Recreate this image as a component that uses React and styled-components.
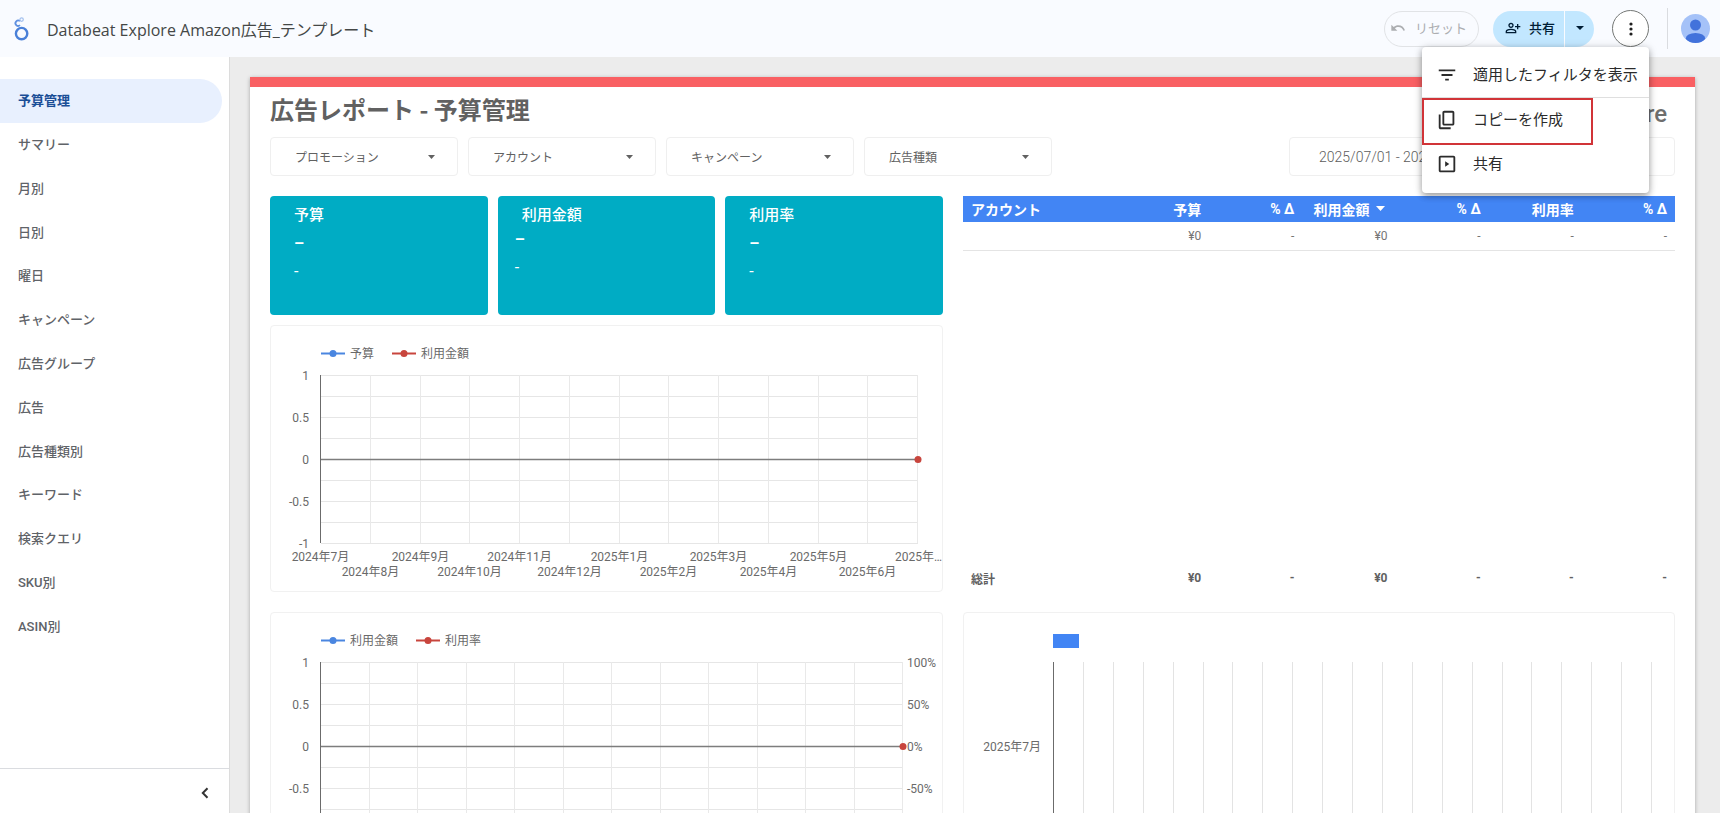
import React, { useLayoutEffect, useRef, useState } from "react";
import styled, { createGlobalStyle } from "styled-components";

const GlobalStyle = createGlobalStyle`
  *, *::before, *::after { box-sizing: border-box; }
  body {
    margin: 0;
    color: #616161;
    background: #ececec;
    font-family: Roboto, "Noto Sans CJK JP", sans-serif;
    font-size: 12px;
  }
  button, select { font: inherit; color: inherit; }
`;

const Shell = styled.div`
  display: flex;
  flex-direction: column;
  height: 100vh;
  overflow: hidden;
`;

/* ---------- header ---------- */

const Header = styled.header`
  position: relative;
  z-index: 2;
  display: flex;
  flex: none;
  align-items: center;
  height: 57px;
  padding: 0 10px 0 12px;
  background: #f9fbff;
`;

const DocTitle = styled.h1`
  margin: 0 auto 0 15px;
  padding-top: 2px;
  color: #444746;
  font-family: "Open Sans", "Noto Sans CJK JP", sans-serif;
  font-size: 16px;
  font-weight: 400;
  line-height: 24px;
  white-space: nowrap;
`;

const ResetButton = styled.button`
  display: flex;
  align-items: center;
  gap: 9px;
  height: 36px;
  margin-right: 14px;
  padding: 0 11px 2px 5px;
  border: 1px solid #e1e3e6;
  border-radius: 18px;
  background: transparent;
  color: #acaeb1;
  font-size: 13px;
`;

const SplitButton = styled.div`
  display: flex;
  height: 36px;
  margin-right: 18px;
  border-radius: 18px;
  overflow: hidden;
  gap: 1px;
`;

const SplitPart = styled.button`
  display: flex;
  align-items: center;
  justify-content: center;
  gap: 8px;
  width: ${(p) => p.$width}px;
  padding: 0 0 2px ${(p) => (p.$main ? 3 : 0)}px;
  border: 0;
  background: #c2e7ff;
  color: #001d35;
  font-size: 13px;
  font-weight: 500;
`;

const MenuAnchor = styled.div`
  position: relative;
`;

const MoreButton = styled.button`
  display: flex;
  align-items: center;
  justify-content: center;
  width: 37px;
  height: 37px;
  padding: 0;
  border: 1px solid #747775;
  border-radius: 50%;
  background: #fff;
  color: #1f1f1f;
`;

const HeaderRule = styled.span`
  width: 1px;
  height: 41px;
  margin: 0 13px 0 18px;
  background: #dadce0;
`;

const AvatarButton = styled.button`
  display: flex;
  padding: 0;
  border: 0;
  border-radius: 50%;
  background: transparent;
`;

const Menu = styled.div`
  position: absolute;
  top: 37px;
  right: 0;
  width: 227px;
  padding: 6px 0 7px;
  border-radius: 4px;
  background: #fff;
  box-shadow: 0 3px 6px rgba(0, 0, 0, 0.3), 0 1px 10px rgba(0, 0, 0, 0.16);
`;

const MenuItem = styled.button`
  position: relative;
  display: flex;
  align-items: center;
  gap: 15px;
  width: 100%;
  height: 44px;
  padding: 0 0 0 14px;
  border: 0;
  background: transparent;
  color: #2b2b2b;
  font-size: 15px;
  white-space: nowrap;
`;

const MenuLabel = styled.span`
  padding-bottom: 3px;
`;

const MenuRule = styled.div`
  height: 1px;
  background: #dfdfdf;
`;

const Highlight = styled.span`
  position: absolute;
  top: 0;
  left: 0;
  width: 171px;
  height: 47px;
  border: 2px solid #d13438;
`;

/* ---------- body ---------- */

const Body = styled.div`
  display: flex;
  flex: 1;
  min-height: 0;
`;

const Sidebar = styled.aside`
  display: flex;
  flex: none;
  flex-direction: column;
  width: 230px;
  border-right: 1px solid #dcdcdc;
  background: #fff;
`;

const PageList = styled.nav`
  display: grid;
  grid-auto-rows: 1fr;
  height: 569px;
  margin: 22px 7px auto 0;
`;

const PageLink = styled.a`
  display: flex;
  align-items: center;
  padding: 0 0 2px 18px;
  border-radius: 0 22px 22px 0;
  background: ${(p) => (p.$active ? "#e8f0fe" : "transparent")};
  color: ${(p) => (p.$active ? "#1a4e96" : "#5f6368")};
  font-size: 13px;
  font-weight: ${(p) => (p.$active ? 700 : 500)};
  text-decoration: none;
`;

const SidebarFooter = styled.div`
  display: flex;
  align-items: center;
  justify-content: flex-end;
  height: 45px;
  padding: 4px 14px 0 0;
  border-top: 1px solid #dadce0;
`;

const CollapseButton = styled.button`
  display: flex;
  padding: 4px;
  border: 0;
  background: transparent;
  color: #333;
  margin-right: 2px;
`;

const Canvas = styled.main`
  flex: 1;
  min-width: 0;
  padding: 20px 25px 0 20px;
  overflow: hidden;
`;

const Report = styled.article`
  padding: 0 20px 20px;
  border-top: 10px solid #f96063;
  background: #fff;
  box-shadow: 0 1px 4px rgba(0, 0, 0, 0.3);
`;

const ReportHead = styled.div`
  display: flex;
  align-items: flex-start;
  justify-content: space-between;
  height: 50px;
  padding: 6px 8px 0 0;
`;

const ReportTitle = styled.h2`
  margin: 0;
  color: #616161;
  font-family: "Noto Sans CJK JP", sans-serif;
  font-size: 24px;
  font-weight: 700;
  line-height: 32px;
`;

const Brand = styled.span`
  padding-top: 5px;
  color: #6e6e6e;
  font-size: 24px;
  font-weight: 500;
  line-height: 32px;
`;

const Controls = styled.div`
  display: flex;
  gap: 10px;
  margin-bottom: 20px;
`;

const Control = styled.button`
  display: flex;
  align-items: center;
  justify-content: space-between;
  width: 188px;
  height: 39px;
  padding: 0 22px 0 24px;
  border: 1px solid #efefef;
  border-radius: 4px;
  background: #fff;
  color: #616161;
  font-size: 12px;
`;

const DateControl = styled(Control)`
  width: 386px;
  margin-left: auto;
  padding-left: 29px;
  color: #5c5c5c;
  font-size: 14px;
  font-weight: 300;
`;

const Columns = styled.div`
  display: grid;
  grid-template-columns: 673fr 712fr;
  column-gap: 20px;
  row-gap: 20px;
`;

const Stack = styled.div`
  display: flex;
  flex-direction: column;
  gap: 10px;
  min-width: 0;
`;

const ScoreRow = styled.div`
  display: grid;
  grid-template-columns: repeat(3, 1fr);
  gap: 10px;
`;

const Score = styled.section`
  height: 119px;
  padding: 8px 24px;
  border-radius: 4px;
  background: #00acc4;
  color: #fff;
`;

const ScoreName = styled.h3`
  margin: 0;
  font-size: 15px;
  font-weight: 500;
  line-height: 22px;
`;

const ScoreFigures = styled.div`
  padding-top: ${(p) => (p.$tight ? 0 : 4)}px;
  margin-left: ${(p) => (p.$tight ? -7 : 0)}px;
  font-size: 16px;
  line-height: 28px;
`;

const ScoreValue = styled.div`
  font-weight: 700;
`;

const ScoreDelta = styled.div`
  font-weight: 400;
`;

const Card = styled.section`
  min-width: 0;
  height: 267px;
  border: 1px solid #f1f1f1;
  border-radius: 4px;
  background: #fff;
`;

const Plot = styled.svg`
  display: block;
  width: 100%;
  height: 100%;
  overflow: visible;
  fill: #6a6a6a;
  font-size: 12px;
`;

const Table = styled.table`
  width: 100%;
  height: 396px;
  border-collapse: collapse;
  table-layout: fixed;
  font-size: 12px;
  text-align: right;

  th, td { padding: 0 8px; white-space: nowrap; }
  th:first-child { text-align: left; }
  thead tr { height: 26px; background: #4285f4; color: #fff; font-size: 14px; }
  thead th { padding-bottom: 1px; }
  tbody tr { height: 28px; color: #757575; }
  tbody tr:first-child td { border-bottom: 1px solid #e4e4e4; }
  tbody tr:last-child { height: auto; }
  tfoot tr { height: 28px; color: #616161; font-weight: 700; }
`;

const FirstCol = styled.col`
  width: 21.5%;
`;

const SortButton = styled.button`
  display: inline-flex;
  align-items: center;
  gap: 6px;
  padding: 0 3px 0 0;
  border: 0;
  background: transparent;
  font-weight: 700;
`;

/* ---------- icons ---------- */

const Symbol = ({ size, d }) => (
  <svg width={size} height={size} viewBox="0 -960 960 960" fill="currentColor" aria-hidden="true">
    <path d={d} />
  </svg>
);

const Caret = ({ width, height }) => (
  <svg width={width} height={height} viewBox="0 0 10 5" preserveAspectRatio="none" fill="currentColor" aria-hidden="true">
    <path d="M0 0h10L5 5z" />
  </svg>
);

const personAdd =
  "M720-400v-120H600v-80h120v-120h80v120h120v80H800v120h-80Zm-360-80q-66 0-113-47t-47-113q0-66 47-113t113-47q66 0 113 47t47 113q0 66-47 113t-113 47ZM40-160v-112q0-34 17.5-62.5T104-378q62-31 126-46.5T360-440q66 0 130 15.5T616-378q29 15 46.5 43.5T680-272v112H40Zm80-80h480v-32q0-11-5.5-20T580-306q-54-27-109-40.5T360-360q-56 0-111 13.5T140-306q-9 5-14.5 14t-5.5 20v32Zm240-320q33 0 56.5-23.5T440-640q0-33-23.5-56.5T360-720q-33 0-56.5 23.5T280-640q0 33 23.5 56.5T360-560Z";
const filterList = "M400-240v-80h160v80H400ZM240-440v-80h480v80H240ZM120-640v-80h720v80H120Z";
const contentCopy =
  "M360-240q-33 0-56.5-23.5T280-320v-480q0-33 23.5-56.5T360-880h360q33 0 56.5 23.5T800-800v480q0 33-23.5 56.5T720-240H360Zm0-80h360v-480H360v480ZM200-80q-33 0-56.5-23.5T120-160v-560h80v560h440v80H200Z";
const slideshow =
  "M400-355v-250l180 125-180 125ZM200-120q-33 0-56.5-23.5T120-200v-560q0-33 23.5-56.5T200-840h560q33 0 56.5 23.5T840-760v560q0 33-23.5 56.5T760-120H200Zm0-80h560v-560H200v560Z";

const Logo = () => (
  <svg width="20" height="26" viewBox="0 0 20 26" fill="none" aria-hidden="true">
    <circle cx="9.6" cy="17.6" r="5.7" stroke="#4a80d8" strokeWidth="2.4" />
    <path d="M8 9.200A2.700 2.700 0 1 1 8 5.200" stroke="#5f90e0" strokeWidth="1.800" />
    <circle cx="9.600" cy="3.600" r="1.700" stroke="#a3c0ee" strokeWidth="1.200" />
  </svg>
);

const UndoIcon = () => (
  <svg width="16" height="16" viewBox="0 0 24 24" fill="currentColor" aria-hidden="true">
    <path d="M12.500 8c-2.650 0-5.050.990-6.900 2.600L2 7v9h9l-3.620-3.620c1.390-1.160 3.160-1.880 5.120-1.880 3.540 0 6.550 2.310 7.600 5.500l2.370-.780C21.080 11.030 17.150 8 12.500 8z" />
  </svg>
);

const MoreIcon = () => (
  <svg width="4" height="14" viewBox="0 0 4 14" fill="currentColor" aria-hidden="true">
    <circle cx="2" cy="2" r="1.600" />
    <circle cx="2" cy="7" r="1.600" />
    <circle cx="2" cy="12" r="1.600" />
  </svg>
);

const Avatar = () => (
  <svg width="29" height="29" viewBox="0 0 29 29" aria-hidden="true">
    <clipPath id="avatar-clip"><circle cx="14.500" cy="14.500" r="14.500" /></clipPath>
    <g clipPath="url(#avatar-clip)">
      <rect width="29" height="29" fill="#a5c2f8" />
      <circle cx="14.500" cy="11" r="5.500" fill="#4272db" />
      <ellipse cx="14.500" cy="24.500" rx="9.700" ry="5.500" fill="#4272db" />
    </g>
  </svg>
);

const ChevronLeft = () => (
  <svg width="8" height="12" viewBox="0 0 8 12" fill="none" stroke="currentColor" strokeWidth="2" aria-hidden="true">
    <path d="M6.500 1.200L1.800 6l4.700 4.800" />
  </svg>
);

/* ---------- charts ---------- */

function useWidth(initial) {
  const ref = useRef(null);
  const [width, setWidth] = useState(initial);
  useLayoutEffect(() => {
    const measure = () => setWidth(Math.round(ref.current.getBoundingClientRect().width));
    measure();
    const observer = new ResizeObserver(measure);
    observer.observe(ref.current);
    return () => observer.disconnect();
  }, []);
  return [ref, width];
}

const COLORS = ["#4a86e0", "#c8453d"];
const MONTHS = [
  "2024年7月", "2024年8月", "2024年9月", "2024年10月", "2024年11月", "2024年12月",
  "2025年1月", "2025年2月", "2025年3月", "2025年4月", "2025年5月", "2025年6月", "2025年…",
];
const range = (n) => Array.from({ length: n }, (_, i) => i);

function LineChart({ series, levels, percents = [], months = [], label }) {
  const [ref, width] = useWidth(671);
  const left = 50;
  const right = width - (percents.length ? 39 : 24);
  const top = 49;
  const height = 168;
  const middle = top + height / 2 + 0.5;
  const x = (i) => Math.round(left + ((right - left) * i) / 12) - 0.5;
  const y = (i) => Math.round(top + (height * i) / 8) + 0.5;
  let cursor = left;

  return (
    <Plot ref={ref} role="img" aria-label={label}>
      {series.map((name, i) => {
        const at = cursor;
        cursor += 29 + name.length * 12 + 18;
        return (
          <g key={name}>
            <path d={`M${at} 27.500h24`} stroke={COLORS[i]} strokeWidth="2" />
            <circle cx={at + 12} cy="27.500" r="3.5" fill={COLORS[i]} />
            <text x={at + 29} y="32">{name}</text>
          </g>
        );
      })}
      {range(9).map((i) => <path key={i} d={`M${left} ${y(i)}H${right}`} stroke="#e6e6e6" />)}
      {range(13).map((i) => <path key={i} d={`M${x(i)} ${top}V${top + height}`} stroke="#e9e9e9" />)}
      <path d={`M${left - 0.5} ${top}V${top + height}`} stroke="#6b6b6b" />
      <path d={`M${left} ${middle}H${right}`} stroke="#7d7d7d" strokeWidth="1.500" />
      <circle cx={right} cy={middle} r="3.5" fill={COLORS[1]} />
      {levels.map((text, i) => (
        <text key={text} x={left - 12} y={y(i * 2) + 4} textAnchor="end">{text}</text>
      ))}
      {percents.map((text, i) => (
        <text key={text} x={right + 4} y={y(i * 2) + 4}>{text}</text>
      ))}
      {months.map((text, i) => (
        <text
          key={text}
          x={i === 12 ? width : x(i)}
          y={top + height + (i % 2 ? 33 : 18)}
          textAnchor={i === 12 ? "end" : "middle"}
        >
          {text}
        </text>
      ))}
    </Plot>
  );
}

function BarChart() {
  const [ref, width] = useWidth(710);
  const left = 90;
  const right = width - 22;
  const x = (i) => Math.round(left + ((right - left) * i) / 20) - 0.5;
  return (
    <Plot ref={ref} role="img" aria-label="月別の棒グラフ">
      <rect x={left - 1} y="21" width="26" height="14" fill="#4285f4" />
      {range(21).map((i) => (
        <path key={i} d={`M${x(i)} 49V218`} stroke={i ? "#e3e3e3" : "#6b6b6b"} />
      ))}
      <text x={left - 13} y="138" textAnchor="end">2025年7月</text>
    </Plot>
  );
}

/* ---------- page ---------- */

const PAGES = [
  "予算管理", "サマリー", "月別", "日別", "曜日", "キャンペーン", "広告グループ",
  "広告", "広告種類別", "キーワード", "検索クエリ", "SKU別", "ASIN別",
];
const FILTERS = ["プロモーション", "アカウント", "キャンペーン", "広告種類"];
const SCORES = [{ name: "予算" }, { name: "利用金額", tight: true }, { name: "利用率" }];

export default function App() {
  return (
    <>
      <GlobalStyle />
      <Shell>
        <Header>
          <Logo />
          <DocTitle>Databeat Explore Amazon広告_テンプレート</DocTitle>
          <ResetButton disabled><UndoIcon />リセット</ResetButton>
          <SplitButton>
            <SplitPart $width={71} $main><Symbol size={16} d={personAdd} />共有</SplitPart>
            <SplitPart $width={29} aria-label="共有オプション"><Caret width={8} height={4} /></SplitPart>
          </SplitButton>
          <MenuAnchor>
            <MoreButton aria-label="その他"><MoreIcon /></MoreButton>
            <Menu>
              <MenuItem><Symbol size={22} d={filterList} /><MenuLabel>適用したフィルタを表示</MenuLabel></MenuItem>
              <MenuRule />
              <MenuItem><Symbol size={22} d={contentCopy} /><MenuLabel>コピーを作成</MenuLabel><Highlight /></MenuItem>
              <MenuItem><Symbol size={22} d={slideshow} /><MenuLabel>共有</MenuLabel></MenuItem>
            </Menu>
          </MenuAnchor>
          <HeaderRule />
          <AvatarButton aria-label="アカウント"><Avatar /></AvatarButton>
        </Header>
        <Body>
          <Sidebar>
            <PageList>
              {PAGES.map((page, i) => (
                <PageLink key={page} href="#" $active={i === 0}>{page}</PageLink>
              ))}
            </PageList>
            <SidebarFooter>
              <CollapseButton aria-label="折りたたむ"><ChevronLeft /></CollapseButton>
            </SidebarFooter>
          </Sidebar>
          <Canvas>
            <Report>
              <ReportHead>
                <ReportTitle>広告レポート - 予算管理</ReportTitle>
                <Brand>Databeat Explore</Brand>
              </ReportHead>
              <Controls>
                {FILTERS.map((name) => (
                  <Control key={name}>{name}<Caret width={7} height={4} /></Control>
                ))}
                <DateControl>2025/07/01 - 2025/07/31</DateControl>
              </Controls>
              <Columns>
                <Stack>
                  <ScoreRow>
                    {SCORES.map(({ name, tight }) => (
                      <Score key={name}>
                        <ScoreName>{name}</ScoreName>
                        <ScoreFigures $tight={tight}>
                          <ScoreValue>–</ScoreValue>
                          <ScoreDelta>-</ScoreDelta>
                        </ScoreFigures>
                      </Score>
                    ))}
                  </ScoreRow>
                  <Card>
                    <LineChart
                      series={["予算", "利用金額"]}
                      levels={["1", "0.5", "0", "-0.5", "-1"]}
                      months={MONTHS}
                      label="予算と利用金額の推移"
                    />
                  </Card>
                </Stack>
                <Table>
                  <colgroup>
                    <FirstCol />
                    <col /><col /><col /><col /><col /><col />
                  </colgroup>
                  <thead>
                    <tr>
                      <th>アカウント</th>
                      <th>予算</th>
                      <th>% Δ</th>
                      <th><SortButton>利用金額<Caret width={9} height={5} /></SortButton></th>
                      <th>% Δ</th>
                      <th>利用率</th>
                      <th>% Δ</th>
                    </tr>
                  </thead>
                  <tbody>
                    <tr><td /><td>¥0</td><td>-</td><td>¥0</td><td>-</td><td>-</td><td>-</td></tr>
                    <tr><td colSpan={7} /></tr>
                  </tbody>
                  <tfoot>
                    <tr><th>総計</th><td>¥0</td><td>-</td><td>¥0</td><td>-</td><td>-</td><td>-</td></tr>
                  </tfoot>
                </Table>
                <Card>
                  <LineChart
                    series={["利用金額", "利用率"]}
                    levels={["1", "0.5", "0", "-0.5"]}
                    percents={["100%", "50%", "0%", "-50%"]}
                    label="利用金額と利用率の推移"
                  />
                </Card>
                <Card><BarChart /></Card>
              </Columns>
            </Report>
          </Canvas>
        </Body>
      </Shell>
    </>
  );
}
